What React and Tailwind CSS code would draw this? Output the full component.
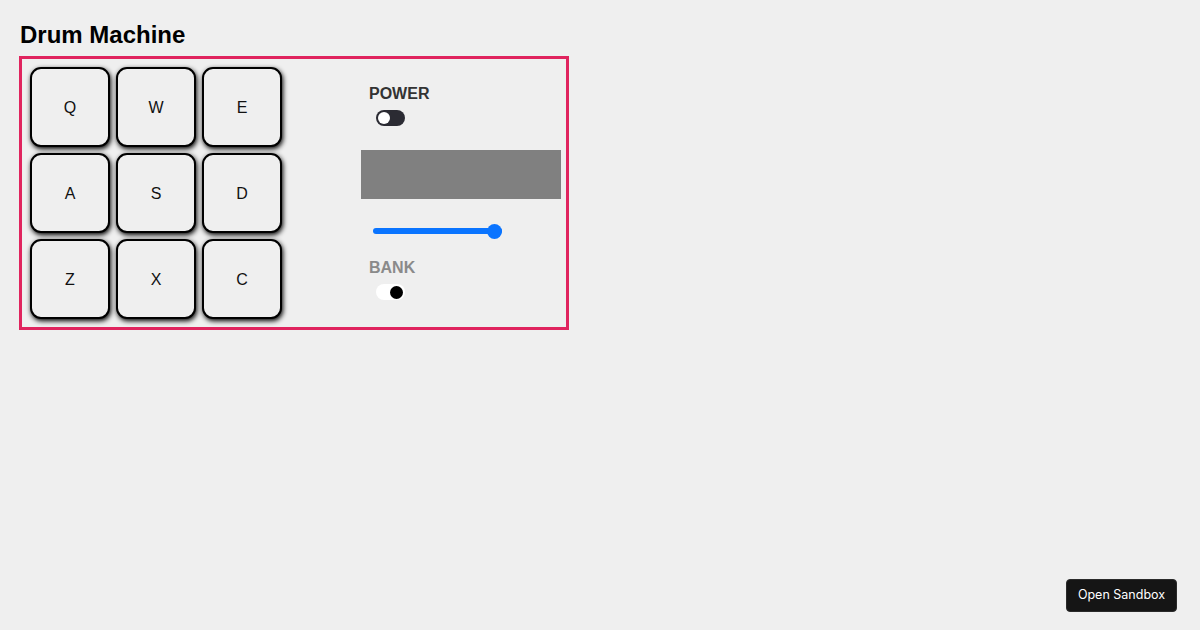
import React from "react";

const KEYS = ["Q", "W", "E", "A", "S", "D", "Z", "X", "C"];

export default function App() {
  return (
    <div
      className="min-h-[630px] w-full bg-[#efefef] pl-[19px] pt-[21px]"
      style={{ fontFamily: '"Liberation Sans", Arial, sans-serif' }}
    >
      <h1 className="pl-[1px] text-[24px] font-bold leading-[28px] text-black">
        Drum Machine
      </h1>
      <div className="mt-[7px] flex w-[550px] border-[3px] border-[#e0245e]">
        <div className="grid grid-cols-[80px_80px_80px] gap-[6px] p-[8px]">
          {KEYS.map((k) => (
            <div
              key={k}
              className="flex h-[80px] w-[80px] items-center justify-center rounded-[11px] border-2 border-black bg-[#efefef] pt-[2px] text-[16px] text-[#111] shadow-[1px_2px_5px_#000]"
            >
              {k}
            </div>
          ))}
        </div>
        <div className="ml-[71px] flex w-[200px] flex-col pt-[26px]">
          <div className="ml-[8px] text-[16px] font-bold leading-[18px] text-[#333]">
            POWER
          </div>
          <div className="ml-[15px] mt-[7px] flex h-[16px] w-[29px] items-center rounded-full bg-[#2b2b33] px-[2px]">
            <div className="h-[12px] w-[12px] rounded-full bg-white" />
          </div>
          <div className="mt-[24px] h-[49px] w-[200px] bg-[#808080]" />
          <div className="relative ml-[12px] mt-[24px] flex h-[16px] w-[129px] items-center">
            <div className="h-[6px] w-full rounded-full bg-[#0a74ff]" />
            <div className="absolute right-0 top-[0.5px] h-[15px] w-[15px] rounded-full bg-[#0a74ff]" />
          </div>
          <div className="ml-[8px] mt-[20px] text-[16px] font-bold leading-[18px] text-[#8a8a8a]">
            BANK
          </div>
          <div className="ml-[15px] mt-[7px] flex h-[16px] w-[29px] items-center justify-end rounded-full bg-white px-[2px]">
            <div className="h-[13px] w-[13px] rounded-full bg-black" />
          </div>
        </div>
      </div>
      <button
        className="fixed bottom-[18px] right-[23px] flex h-[33px] w-[111px] items-center justify-center rounded-[4px] border border-[#2a2a2a] bg-[#151515] text-[12.5px] text-white"
        style={{ fontFamily: 'Inter, "Noto Sans", sans-serif' }}
      >
        Open Sandbox
      </button>
    </div>
  );
}
